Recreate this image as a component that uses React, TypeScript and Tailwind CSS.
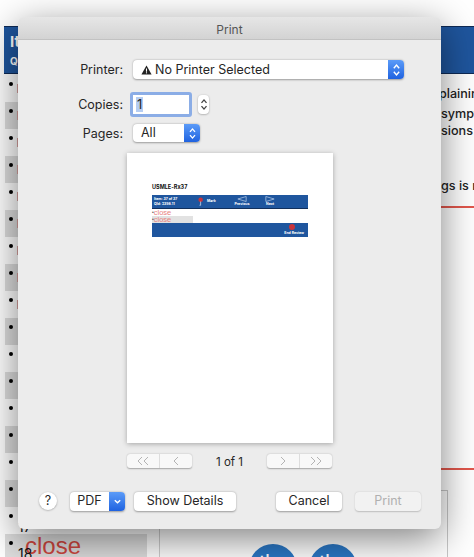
import React from 'react';

const font = { fontFamily: 'Inter, "Liberation Sans", sans-serif' };

function UpDown({ className }: { className: string }) {
  return (
    <svg viewBox="0 0 12 18" className={className} fill="none" stroke="currentColor" strokeWidth="1.6">
      <path d="M3 7 L6 3.5 L9 7" />
      <path d="M3 11 L6 14.5 L9 11" />
    </svg>
  );
}

function Warning() {
  return (
    <svg viewBox="0 0 12 11" className="w-[11px] h-[10px]">
      <path d="M6 0.5 L11.6 10.5 L0.4 10.5 Z" fill="#222" />
      <rect x="5.4" y="3.8" width="1.2" height="3.6" fill="#fff" />
      <rect x="5.4" y="8" width="1.2" height="1.2" fill="#fff" />
    </svg>
  );
}

function Chevron({ dir, double }: { dir: 'left' | 'right'; double?: boolean }) {
  return (
    <svg viewBox="0 0 14 10" className="w-[14px] h-[10px]" fill="none" stroke="#b4b4b4" strokeWidth="1">
      {double ? (
        dir === 'left' ? (
          <>
            <path d="M6 1 L2 5 L6 9" />
            <path d="M12 1 L8 5 L12 9" />
          </>
        ) : (
          <>
            <path d="M2 1 L6 5 L2 9" />
            <path d="M8 1 L12 5 L8 9" />
          </>
        )
      ) : dir === 'left' ? (
        <path d="M9 1 L5 5 L9 9" />
      ) : (
        <path d="M5 1 L9 5 L5 9" />
      )}
    </svg>
  );
}

function PagerGroup({ first, second }: { first: React.ReactNode; second: React.ReactNode }) {
  return (
    <div className="flex w-[65px] h-[14px] rounded-[3px] bg-[#f8f8f8] shadow-[0_0.5px_1.5px_rgba(0,0,0,0.3)]">
      <div className="flex-1 flex items-center justify-center border-r border-[#dddddd]">{first}</div>
      <div className="flex-1 flex items-center justify-center">{second}</div>
    </div>
  );
}

function MiniPage() {
  return (
    <div className="w-[206px] h-[290px] ml-[109px] mt-[11px] bg-white shadow-[0_1px_5px_rgba(0,0,0,0.3)] pt-[31px] pl-[25px]">
      <div className="text-[5.5px] leading-[6px] font-bold text-[#111]">USMLE-Rx37</div>
      <div className="w-[156px] mt-[5px]">
        <div className="h-[14px] bg-[#1f569e] border-b border-[#12305c] flex text-white text-[3.5px] font-bold leading-[5px]">
          <div className="w-[42px] pl-[2px] pt-[2px]">
            <div>Item: 37 of 37</div>
            <div>QId: 2356.11</div>
          </div>
          <div className="w-[28px] flex items-center gap-[3px] pl-[4px]">
            <svg viewBox="0 0 8 12" className="w-[6px] h-[9px]">
              <circle cx="3.5" cy="3.5" r="3" fill="#c8343c" />
              <path d="M3.5 6 V11 H2" stroke="#fff" strokeWidth="0.8" fill="none" />
            </svg>
            <span>Mark</span>
          </div>
          <div className="w-[28px] ml-[6px] flex flex-col items-center pt-[1px]">
            <svg viewBox="0 0 12 7" className="w-[10px] h-[6px]" fill="none" stroke="#c4d6ee" strokeWidth="0.8">
              <path d="M1 3.5 L11 0.5 V6.5 Z" />
            </svg>
            <span>Previous</span>
          </div>
          <div className="w-[28px] flex flex-col items-center pt-[1px]">
            <svg viewBox="0 0 12 7" className="w-[10px] h-[6px]" fill="none" stroke="#c4d6ee" strokeWidth="0.8">
              <path d="M11 3.5 L1 0.5 V6.5 Z" />
            </svg>
            <span>Next</span>
          </div>
        </div>
        <div
          className="h-[14px] text-[#e8837f] text-[7.5px] leading-[7px]"
          style={{ fontFamily: '"Liberation Sans", sans-serif' }}
        >
          <div className="flex"><span className="text-[#555] text-[5px]">•</span>close</div>
          <div className="flex w-[41px] bg-[#e2e2e2]"><span className="text-[#555] text-[5px]">•</span>close</div>
        </div>
        <div className="h-[14px] bg-[#1f569e] flex flex-col items-end pr-[4px] pt-[1px] text-white text-[3.5px] font-bold leading-[4px]">
          <div className="w-[6px] h-[6px] rounded-full bg-[#c8343c] mr-[9px]" />
          <div className="mt-[1px]">End Review</div>
        </div>
      </div>
    </div>
  );
}

function PrintDialog() {
  return (
    <div
      className="absolute left-[18px] top-[17px] w-[423px] h-[512px] rounded-[6px] bg-[#ececec] overflow-hidden text-[12.5px] text-[#262626] shadow-[0_10px_38px_rgba(0,0,0,0.5)]"
      style={font}
    >
      <div className="h-[23px] flex items-center justify-center pt-[3px] bg-gradient-to-b from-[#e6e6e6] to-[#d3d3d3] border-b border-[#c2c2c2] text-[12px] text-[#555555]">
        Print
      </div>

      <div className="flex items-center mt-[20px] h-[19px]">
        <div className="w-[105px] text-right pt-[1px]">Printer:</div>
        <div className="ml-[10px] w-[271px] h-[19px] flex rounded-[4px] bg-white shadow-[0_0.5px_2px_rgba(0,0,0,0.35)] overflow-hidden">
          <div className="flex-1 flex items-center gap-[3px] pl-[8px]">
            <Warning />
            <span className="pt-[1px]">No Printer Selected</span>
          </div>
          <div className="w-[16px] flex items-center justify-center bg-gradient-to-b from-[#5b9bf8] to-[#1f62e0] text-white">
            <UpDown className="w-[11px] h-[16px]" />
          </div>
        </div>
      </div>

      <div className="flex items-center mt-[13px] h-[25px]">
        <div className="w-[105px] text-right pt-[2px]">Copies:</div>
        <div className="ml-[7px] w-[62px] h-[25px] rounded-[3px] border-[3px] border-[#8bade6] bg-white flex items-center pl-[3px]">
          <span className="bg-[#b5cdf2] text-[13px] leading-[15px] px-[1px]">1</span>
        </div>
        <div className="ml-[6px] w-[11px] h-[19px] rounded-[4px] bg-white shadow-[0_0.5px_2px_rgba(0,0,0,0.35)] flex items-center justify-center text-[#444]">
          <UpDown className="w-[10px] h-[15px]" />
        </div>
      </div>

      <div className="flex items-center mt-[7px] h-[18px]">
        <div className="w-[105px] text-right pt-[2px]">Pages:</div>
        <div className="ml-[10px] w-[67px] h-[18px] flex rounded-[4px] bg-white shadow-[0_0.5px_2px_rgba(0,0,0,0.35)] overflow-hidden">
          <div className="flex-1 flex items-center pl-[8px] pt-[1px]">All</div>
          <div className="w-[16px] flex items-center justify-center bg-gradient-to-b from-[#5b9bf8] to-[#1f62e0] text-white">
            <UpDown className="w-[11px] h-[15px]" />
          </div>
        </div>
      </div>

      <MiniPage />

      <div className="flex items-center mt-[11px] ml-[109px] w-[205px] h-[14px]">
        <PagerGroup first={<Chevron dir="left" double />} second={<Chevron dir="left" />} />
        <div className="flex-1 text-center text-[11.5px] pt-[3px]">1 of 1</div>
        <PagerGroup first={<Chevron dir="right" />} second={<Chevron dir="right" double />} />
      </div>

      <div className="flex items-center mt-[23px] pl-[21px] h-[20px]">
        <div className="w-[18px] h-[18px] rounded-full bg-white shadow-[0_0.5px_2px_rgba(0,0,0,0.35)] flex items-center justify-center">?</div>
        <div className="ml-[13px] w-[55px] h-[19px] flex rounded-[4px] bg-white shadow-[0_0.5px_2px_rgba(0,0,0,0.35)] overflow-hidden">
          <div className="flex-1 flex items-center justify-center pt-[1px]">PDF</div>
          <div className="w-[16px] flex items-center justify-center bg-gradient-to-b from-[#5b9bf8] to-[#1f62e0] text-white">
            <svg viewBox="0 0 10 10" className="w-[9px] h-[9px]" fill="none" stroke="currentColor" strokeWidth="1.6">
              <path d="M2 3.5 L5 6.5 L8 3.5" />
            </svg>
          </div>
        </div>
        <div className="ml-[9px] w-[102px] h-[19px] rounded-[4px] bg-white shadow-[0_0.5px_2px_rgba(0,0,0,0.35)] flex items-center justify-center pt-[1px]">Show Details</div>
        <div className="ml-[40px] w-[66px] h-[19px] rounded-[4px] bg-white shadow-[0_0.5px_2px_rgba(0,0,0,0.35)] flex items-center justify-center pt-[1px]">Cancel</div>
        <div className="ml-[13px] w-[66px] h-[19px] rounded-[4px] bg-[#f2f2f2] shadow-[0_0.5px_1.5px_rgba(0,0,0,0.2)] flex items-center justify-center pt-[1px] text-[#b0b0b0]">Print</div>
      </div>
    </div>
  );
}

const rowIndexes = [0, 1, 2, 3, 4, 5, 6, 7, 8, 9, 10, 11, 12, 13, 14, 15, 16, 17];

export default function App() {
  return (
    <div className="relative w-[474px] h-[557px] overflow-hidden bg-white text-[#222]" style={font}>
      <div className="h-[26px]" />
      <div className="h-[48px] ml-[4px] bg-[#1f569e] border-y border-[#0e2a55] text-white font-bold pl-[6px] pt-[5px]">
        <div className="text-[15px] leading-[20px]">It</div>
        <div className="text-[10px] leading-[14px] pt-[2px]">Q</div>
      </div>

      <div className="flex">
        <div className="w-[160px] h-[483px] border-r border-[#cfcfcf] pl-[5px] pt-[1px] shrink-0 overflow-hidden">
          <div className="w-[142px]">
            {rowIndexes.map((i) => (
              <div key={i} className={i % 2 === 0 ? 'h-[27px] flex pl-[4px] pt-[5px]' : 'h-[27px] flex pl-[4px] pt-[5px] bg-[#dedede]'}>
                <div className="w-[4px] h-[4px] rounded-full bg-black mt-[2px]" />
                {i < 9 && <div className="ml-[4px] w-[1px] h-[9px] bg-[#d9a3a0] mt-[4px]" />}
              </div>
            ))}
          </div>
        </div>

        <div className="flex-1 min-w-0 overflow-hidden text-[12.6px] font-medium">
          <div className="pl-[279px] whitespace-nowrap pt-[11px] leading-[18px]">plaining</div>
          <div className="pl-[281px] whitespace-nowrap pt-[2px] leading-[18px]">symptoms</div>
          <div className="pl-[281px] whitespace-nowrap leading-[16px]">sions</div>
          <div className="pl-[281px] whitespace-nowrap mt-[38px] leading-[18px]">gs is not</div>
          <div className="h-[2px] bg-[#e2574c] mt-[11px]" />
          <div className="h-[2px] bg-[#e2574c] mt-[260px]" />
          <div className="h-[1px] bg-[#c8c8c8] mt-[20px] w-[288px]" />
          <div className="flex gap-[12px] ml-[89px] mt-[53px]">
            <div className="w-[48px] h-[48px] rounded-full bg-[#2b78c6] text-white text-center text-[18px] leading-[24px] pt-[6px]">the</div>
            <div className="w-[48px] h-[48px] rounded-full bg-[#2b78c6] text-white text-center text-[18px] leading-[24px] pt-[6px]">the</div>
          </div>
        </div>
      </div>

      <div className="absolute left-[25px] top-[532px] text-[24px] leading-[28px] text-[#d0473f]" style={{ fontFamily: '"Liberation Sans", sans-serif' }}>close</div>
      <div className="absolute left-[18px] top-[519px] text-[14px] leading-[16px] text-[#111]">17</div>
      <div className="absolute left-[18px] top-[546px] text-[14px] leading-[16px] text-[#111]">18</div>
      <div className="absolute left-[447px] top-[490px] bottom-0 w-[1px] bg-[#c8c8c8]" />

      <PrintDialog />
    </div>
  );
}
